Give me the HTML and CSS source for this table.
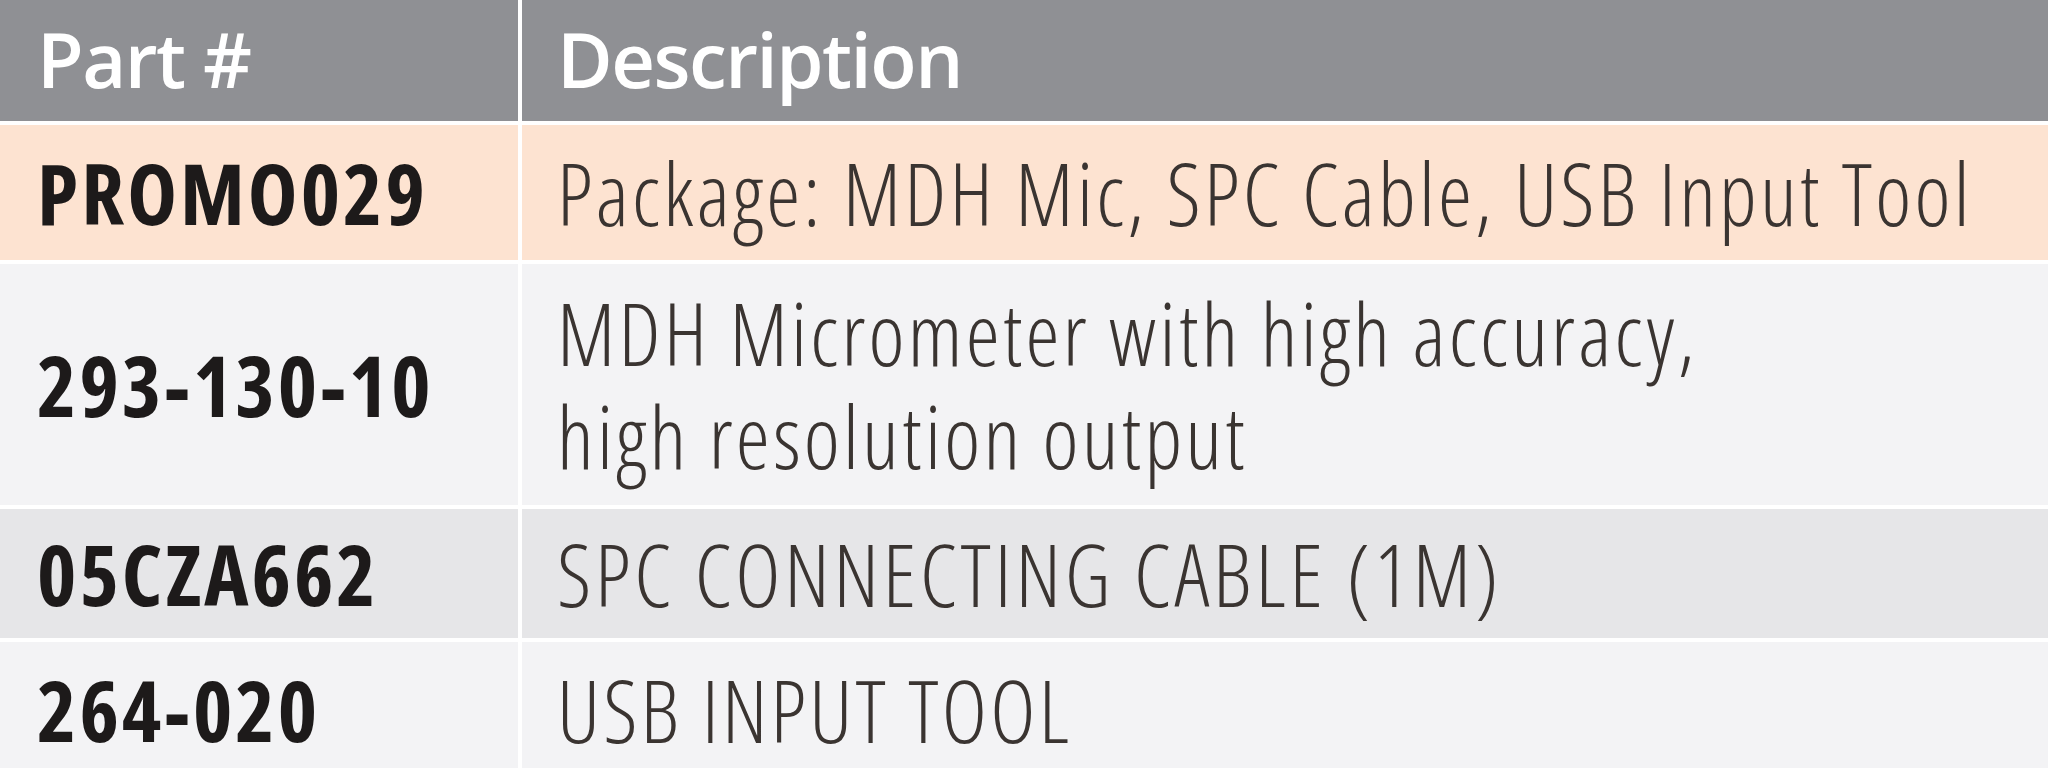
FILE: index.html
```html
<!DOCTYPE html>
<html lang="en">
<head>
<meta charset="utf-8">
<title>Parts</title>
<link rel="stylesheet" href="styles.css">
</head>
<body>
<table class="parts">
  <thead>
    <tr class="head-row">
      <th class="col-part">Part #</th>
      <th class="col-desc">Description</th>
    </tr>
  </thead>
  <tbody>
    <tr class="row row-promo">
      <td class="col-part">PROMO029</td>
      <td class="col-desc">Package: MDH Mic, SPC Cable, USB Input Tool</td>
    </tr>
    <tr class="row row-light row-tall">
      <td class="col-part">293-130-10</td>
      <td class="col-desc">MDH Micrometer with high accuracy,<br>high resolution output</td>
    </tr>
    <tr class="row row-dark">
      <td class="col-part">05CZA662</td>
      <td class="col-desc">SPC CONNECTING CABLE (1M)</td>
    </tr>
    <tr class="row row-light">
      <td class="col-part">264-020</td>
      <td class="col-desc">USB INPUT TOOL</td>
    </tr>
  </tbody>
</table>
</body>
</html>
```

FILE: styles.css
```css
html, body {
  margin: 0;
  padding: 0;
  background: #ffffff;
}

body {
  font-family: "Open Sans", "Liberation Sans Narrow", "Liberation Sans", sans-serif;
}

.parts {
  width: 100%;
  border-collapse: collapse;
  table-layout: fixed;
}

.parts th,
.parts td {
  text-align: left;
  vertical-align: middle;
  padding: 0;
}

.parts .col-part {
  width: 520px;
  padding-left: 37px;
  box-sizing: border-box;
}

.parts .col-desc {
  border-left: 4px solid #ffffff;
  padding-left: 35px;
}

.head-row th {
  background: #8f9094;
  color: #ffffff;
  font-weight: 600;
  font-size: 76px;
  letter-spacing: -1.5px;
  height: 123px;
  line-height: 1;
  padding-bottom: 4px;
  box-sizing: border-box;
}

.row td {
  border-top: 4px solid #ffffff;
  padding-top: 16px;
  padding-bottom: 16px;
  line-height: 103px;
  font-stretch: 75%;
}

.row-tall td {
  padding-top: 17px;
  padding-bottom: 18px;
}

.row-dark td {
  padding-top: 13px;
  padding-bottom: 13px;
}

.row td.col-part {
  font-weight: 700;
  font-size: 84px;
  letter-spacing: 3px;
  color: #1d1a1a;
}

.row td.col-desc {
  font-weight: 300;
  font-size: 86px;
  letter-spacing: 3.2px;
  color: #3a3431;
}

.row-dark td.col-desc {
  letter-spacing: 3.8px;
}

.row-promo td { background: #fde3d1; }
.row-light td { background: #f3f3f5; }
.row-dark td { background: #e6e6e8; }
```
